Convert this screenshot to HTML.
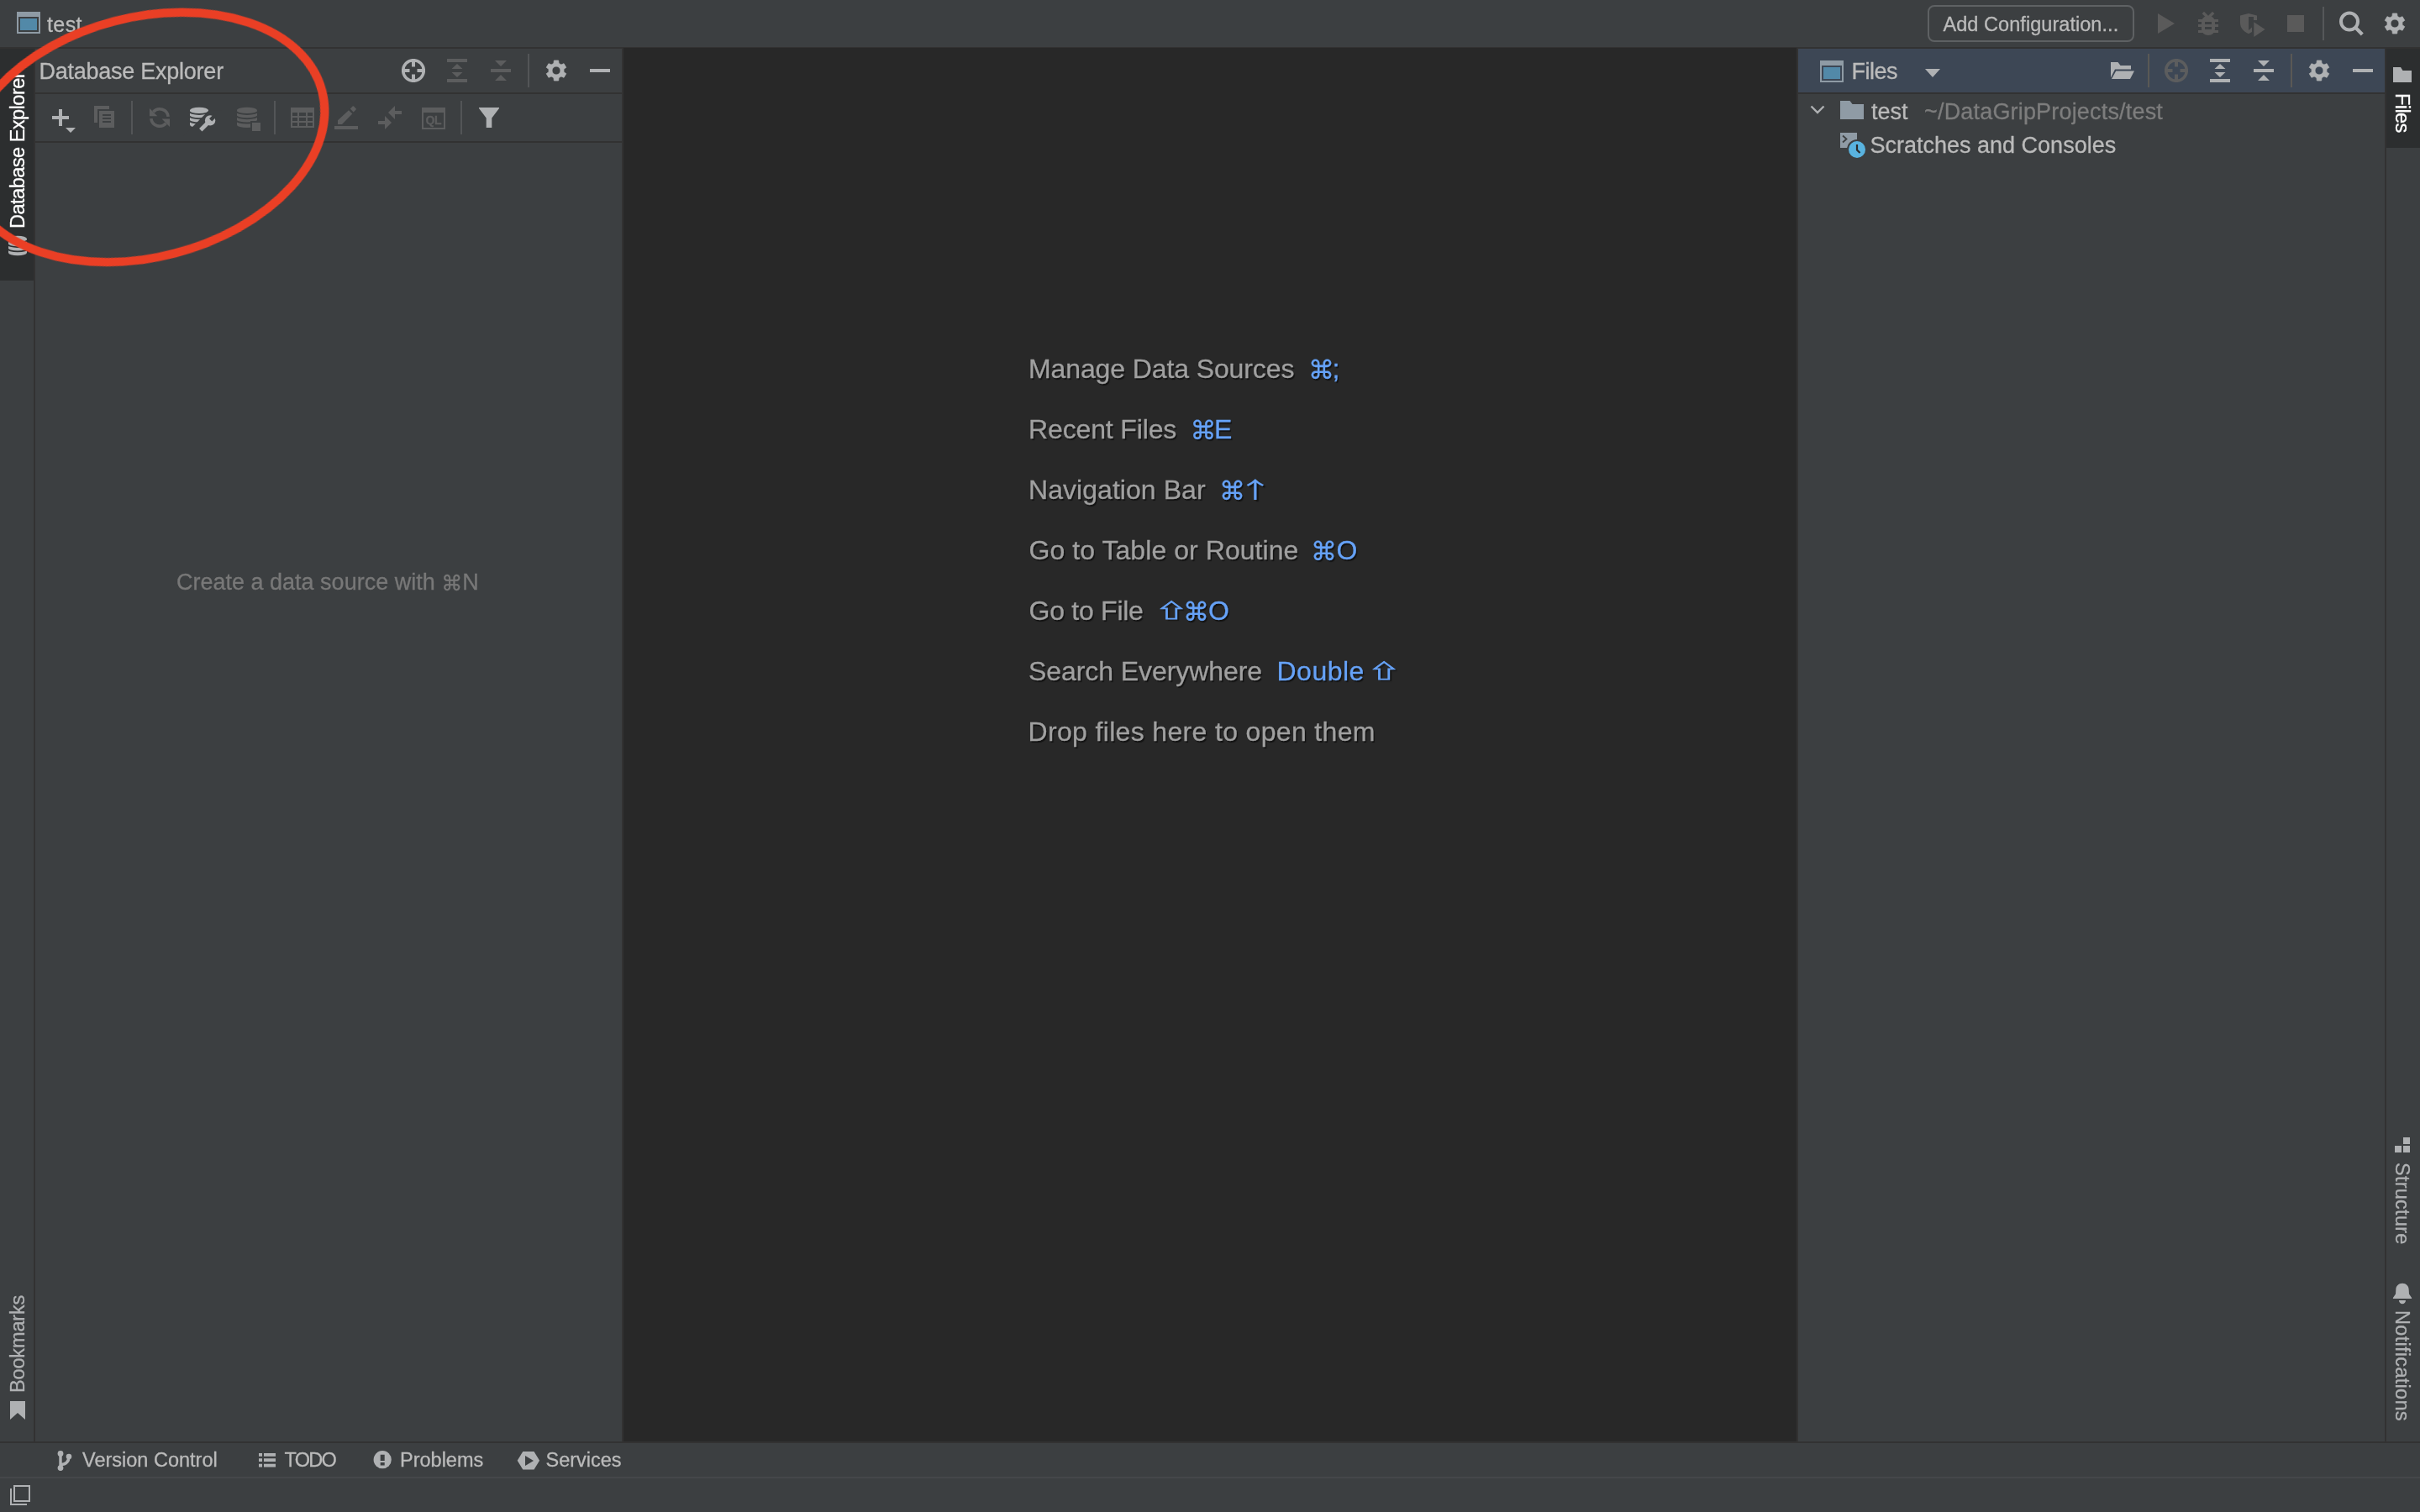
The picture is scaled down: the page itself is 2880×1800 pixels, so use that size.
<!DOCTYPE html>
<html lang="en">
<head>
<meta charset="utf-8">
<title>test - DataGrip</title>
<style>
html,body{margin:0;padding:0;}
body{width:2880px;height:1800px;overflow:hidden;position:relative;background:#3c3f41;
  font-family:"Liberation Sans","DejaVu Sans",sans-serif;color:#bbbbbb;}
.abs{position:absolute;}
.bar{position:absolute;background:#3c3f41;}
.line{position:absolute;background:#323232;}
.t{position:absolute;white-space:nowrap;line-height:1;margin:0;padding:0;-webkit-text-stroke-width:.3px;}
.sym{font-family:"DejaVu Sans",sans-serif;}
svg{position:absolute;overflow:visible;}
.vt{position:absolute;white-space:nowrap;line-height:1;transform-origin:0 0;-webkit-text-stroke-width:.3px;}
/* editor hints */
.hint{position:absolute;white-space:nowrap;line-height:1;font-size:32px;color:#a0a0a0;-webkit-text-stroke-width:.3px;text-shadow:1.5px 1.5px 1px rgba(0,0,0,.55);}
.hint.sc{color:#66a2f7;}
.hint .sym{font-size:31px;position:relative;top:1px;margin-right:-2.5px;letter-spacing:0;}
.hint .arr{font-family:"Noto Sans CJK SC","DejaVu Sans",sans-serif;font-size:26.7px;display:inline-block;width:20px;text-align:center;margin-left:4px;top:-1px;transform:scaleX(1.6);transform-origin:50% 50%;-webkit-text-stroke-width:.15px;text-indent:-3.4px;}
.hint .shf{font-family:"Noto Sans CJK SC","DejaVu Sans",sans-serif;font-size:23.2px;display:inline-block;width:26px;text-align:center;top:-2.7px;transform:scaleX(1.65);transform-origin:50% 50%;-webkit-text-stroke-width:.8px;text-indent:1.4px;}
</style>
</head>
<body>
<div id="root" style="position:absolute;left:0;top:0;width:2880px;height:1800px;will-change:transform;">

<!-- ===== base regions ===== -->
<div class="bar" id="topbar" style="left:0;top:0;width:2880px;height:56px;"></div>
<div class="line" style="left:0;top:56px;width:2880px;height:2px;"></div>

<div class="bar" id="lstripe" style="left:0;top:58px;width:40px;height:1658px;"></div>
<div class="abs" id="lsel" style="left:0;top:58px;width:40px;height:276px;background:#2c2e2f;"></div>
<div class="line" style="left:40px;top:58px;width:2px;height:1658px;"></div>

<div class="bar" id="lpanel" style="left:42px;top:58px;width:698px;height:1658px;"></div>
<div class="line" style="left:42px;top:110px;width:698px;height:2px;"></div>
<div class="line" style="left:42px;top:168px;width:698px;height:2px;"></div>
<div class="line" style="left:740px;top:58px;width:2px;height:1658px;"></div>

<div class="abs" id="editor" style="left:742px;top:57px;width:1396px;height:1659px;background:#282828;"></div>

<div class="line" style="left:2138px;top:58px;width:2px;height:1658px;"></div>
<div class="bar" id="rpanel" style="left:2140px;top:58px;width:698px;height:1658px;"></div>
<div class="abs" id="rhead" style="left:2140px;top:58px;width:698px;height:52px;background:#3d4755;"></div>
<div class="line" style="left:2140px;top:110px;width:698px;height:2px;"></div>
<div class="line" style="left:2838px;top:58px;width:2px;height:1658px;"></div>
<div class="bar" id="rstripe" style="left:2840px;top:58px;width:40px;height:1658px;"></div>
<div class="abs" id="rsel" style="left:2840px;top:58px;width:40px;height:118px;background:#2c2e2f;"></div>

<div class="line" style="left:0;top:1716px;width:2880px;height:2px;"></div>
<div class="bar" id="bbar" style="left:0;top:1718px;width:2880px;height:40px;"></div>
<div class="abs" style="left:0;top:1758px;width:2880px;height:2px;background:#45474a;"></div>
<div class="bar" id="status" style="left:0;top:1760px;width:2880px;height:40px;"></div>

<!-- SECTION:TOPBAR -->
<svg width="2880" height="56" style="left:0;top:0;" viewBox="0 0 2880 56">
  <!-- project icon -->
  <rect x="20" y="14" width="28" height="26" fill="#8f9ba5"/>
  <rect x="22" y="20" width="24" height="18" fill="#3c3f41"/>
  <rect x="24" y="22" width="20" height="14" fill="#5289a8"/>
  <!-- add configuration button -->
  <rect x="2295" y="7" width="244" height="42" rx="7" ry="7" fill="none" stroke="#5e6163" stroke-width="2"/>
  <!-- run -->
  <path d="M2568 16 L2588 28 L2568 40Z" fill="#5a5a5a"/>
  <!-- debug -->
  <g fill="#5a5a5a" stroke="none">
    <path d="M2620 27 C2620 21.5 2623.5 19 2628 19 C2632.500 19 2636 21.5 2636 27 L2636 34 C2636 39 2632.500 42 2628 42 C2623.500 42 2620 39 2620 34Z"/>
    <rect x="2616" y="23" width="24" height="3"/>
    <rect x="2616" y="29" width="24" height="3"/>
    <rect x="2616" y="36" width="24" height="3"/>
    <path d="M2620.600 16.200 L2623 13.800 L2628 18.800 L2633 13.800 L2635.400 16.200 L2629.500 22 L2626.500 22Z"/>
  </g>
  <rect x="2624" y="26" width="8" height="3" fill="#3c3f41"/>
  <rect x="2624" y="32" width="8" height="3" fill="#3c3f41"/>
  <!-- coverage -->
  <path d="M2666 18.500 L2676 16 L2686 18.500 L2686 24 L2682 24 L2682 20 L2676 20 L2676 36 L2680 32.500 L2680 38 L2676 40.200 C2669.500 37 2666 33 2666 27Z" fill="#5a5a5a"/>
  <path d="M2682.300 26.300 L2695.600 35 L2682.300 44Z" fill="#5a5a5a"/>
  <!-- stop -->
  <rect x="2722" y="18" width="20" height="20" fill="#5a5a5a"/>
  <!-- separator -->
  <rect x="2764" y="8" width="2" height="40" fill="#555759"/>
  <!-- search -->
  <circle cx="2796" cy="25.600" r="10" fill="none" stroke="#afb1b3" stroke-width="4"/>
  <path d="M2803.200 32.800 L2811.300 40.900" stroke="#afb1b3" stroke-width="4.200" fill="none"/>
  <!-- settings gear -->
  <path fill-rule="evenodd" fill="#afb1b3" stroke="#afb1b3" stroke-width=".8" stroke-linejoin="round" d="M2853.04 19.42 L2852.66 15.99 L2847.34 15.99 L2846.96 19.42 L2844.09 21.08 L2840.93 19.69 L2838.27 24.30 L2841.05 26.34 L2841.05 29.66 L2838.27 31.70 L2840.93 36.31 L2844.09 34.92 L2846.96 36.58 L2847.34 40.01 L2852.66 40.01 L2853.04 36.58 L2855.91 34.92 L2859.07 36.31 L2861.73 31.70 L2858.95 29.66 L2858.95 26.34 L2861.73 24.30 L2859.07 19.69 L2855.91 21.08Z M2845.00 28.00 a5.00 5.00 0 1 0 10.00 0 a5.00 5.00 0 1 0 -10.00 0Z"/>
</svg>
<div class="t" id="t_test" style="left:56px;top:17px;font-size:25px;letter-spacing:.4px;color:#bbbbbb;">test</div>
<div class="t" id="t_addcfg" style="left:2312.5px;top:18px;font-size:23.5px;letter-spacing:.05px;color:#bbbbbb;">Add Configuration...</div>

<!-- SECTION:LEFT -->
<svg width="742" height="1660" style="left:0;top:58px;" viewBox="0 58 742 1660">
  <!-- header: locate -->
  <circle cx="492" cy="84" r="12.300" fill="none" stroke="#afb1b3" stroke-width="3.500"/>
  <path d="M490 70 h4 v9.500 h-4z M490 98 h4 v-9.500 h-4z M478 82 v4 h9.500 v-4z M506 82 v4 h-9.500 v-4z" fill="#afb1b3"/>
  <!-- expand all (dim) -->
  <path d="M532 70 h24 v4 h-24z M532 94 h24 v4 h-24z M537.500 82 L544 76 L550.500 82z M537.500 86 L544 92 L550.500 86z" fill="#5c5d5e"/>
  <!-- collapse all (dim) -->
  <path d="M584 82 h24 v4 h-24z M589 72 h14 L596 79z M589 96 h14 L596 89z" fill="#5c5d5e"/>
  <rect x="628" y="64" width="2" height="40" fill="#535557"/>
  <path fill-rule="evenodd" fill="#afb1b3" stroke="#afb1b3" stroke-width=".8" stroke-linejoin="round" d="M665.04 75.42 L664.66 71.99 L659.34 71.99 L658.96 75.42 L656.09 77.08 L652.93 75.69 L650.27 80.30 L653.05 82.34 L653.05 85.66 L650.27 87.70 L652.93 92.31 L656.09 90.92 L658.96 92.58 L659.34 96.01 L664.66 96.01 L665.04 92.58 L667.91 90.92 L671.07 92.31 L673.73 87.70 L670.95 85.66 L670.95 82.34 L673.73 80.30 L671.07 75.69 L667.91 77.08Z M657.00 84.00 a5.00 5.00 0 1 0 10.00 0 a5.00 5.00 0 1 0 -10.00 0Z"/>
  <rect x="702" y="82" width="24" height="4" fill="#afb1b3"/>

  <!-- toolbar: add -->
  <path d="M70 130 h4 v8 h8 v4 h-8 v8 h-4 v-8 h-8 v-4 h8z M78 152 h12 l-6 6z" fill="#afb1b3"/>
  <!-- copy (dim) -->
  <path d="M112 126 h18 v4 h-14 v16 h-4z M118 132 h18 v20 h-18z" fill="#5c5d5e"/>
  <path d="M122 136 h10 v2 h-10z M122 140 h10 v2 h-10z M122 144 h10 v2 h-10z" fill="#3c3f41"/>
  <rect x="156" y="120" width="2" height="40" fill="#535557"/>
  <!-- refresh (dim) -->
  <path d="M182.42 133.17 A10.2 10.2 0 0 1 200.14 138.93" fill="none" stroke="#5c5d5e" stroke-width="3.6"/>
  <path d="M178 129 V138.300 H187.300Z" fill="#5c5d5e"/>
  <path d="M179.86 141.07 A10.2 10.2 0 0 0 197.58 146.83" fill="none" stroke="#5c5d5e" stroke-width="3.6"/>
  <path d="M202 151 V141.500 H192.600Z" fill="#5c5d5e"/>
  <!-- db properties (light) -->
  <path d="M226 131.3 A11 3.6 0 0 1 248 131.3 V148.4 A11 3.6 0 0 1 226 148.4Z" fill="#afb1b3"/><path d="M225 132.3 A12 3.6 0 0 0 249 132.3" fill="none" stroke="#3c3f41" stroke-width="2.0"/><path d="M225 137.6 A12 3.6 0 0 0 249 137.6" fill="none" stroke="#3c3f41" stroke-width="2.0"/><path d="M225 142.9 A12 3.6 0 0 0 249 142.9" fill="none" stroke="#3c3f41" stroke-width="2.0"/>
  <path d="M248.600 131.400 L264 131.400 L264 162 L218 162z" fill="#3c3f41"/>
  <g transform="translate(250.100,143.400) rotate(-45)">
    <circle r="6.200" fill="#afb1b3"/><rect x="0.800" y="-2.300" width="8" height="4.600" fill="#3c3f41"/>
    <rect x="-16" y="-2.450" width="12" height="4.900" fill="#afb1b3"/>
  </g>
  <!-- db stop (dim) -->
  <path d="M282 131.3 A12 3.6 0 0 1 306 131.3 V148.4 A12 3.6 0 0 1 282 148.4Z" fill="#5c5d5e"/><path d="M281 132.3 A13 3.6 0 0 0 307 132.3" fill="none" stroke="#3c3f41" stroke-width="2.0"/><path d="M281 137.6 A13 3.6 0 0 0 307 137.6" fill="none" stroke="#3c3f41" stroke-width="2.0"/><path d="M281 142.9 A13 3.6 0 0 0 307 142.9" fill="none" stroke="#3c3f41" stroke-width="2.0"/>
  <rect x="298" y="144" width="14" height="14" fill="#3c3f41"/>
  <rect x="300" y="146" width="10" height="10" fill="#5c5d5e"/>
  <rect x="326" y="120" width="2" height="40" fill="#535557"/>
  <!-- table (dim) -->
  <rect x="346" y="128" width="28" height="24" fill="#5c5d5e"/>
  <path d="M348 134 h6 v4 h-6z M356 134 h8 v4 h-8z M366 134 h6 v4 h-6z M348 140 h6 v4 h-6z M356 140 h8 v4 h-8z M366 140 h6 v4 h-6z M348 146 h6 v4 h-6z M356 146 h8 v4 h-8z M366 146 h6 v4 h-6z" fill="#3c3f41"/>
  <!-- edit (dim) -->
  <path d="M398 150 h28 v4 h-28z M402 143.300 L415 131.300 L419.300 135.600 L407 148 L402 148z" fill="#5c5d5e"/>
  <path d="M416.800 129.400 L419.600 126.600 Q420.300 125.900 421 126.600 L423.600 129.200 Q424.300 129.900 423.600 130.600 L420.600 133.600z" fill="#5c5d5e"/>
  <!-- jump to (dim) -->
  <path d="M462 134 L470 126 V132 H478 V136 H470 V142z M466 146 L458 138 V144 H450 V148 H458 V154z" fill="#5c5d5e"/>
  <!-- QL console (dim) -->
  <path fill-rule="evenodd" d="M502 128 h28 v26 h-28z M504 134 v18 h24 v-18z" fill="#5c5d5e"/>
  <rect x="548" y="120" width="2" height="40" fill="#535557"/>
  <!-- filter (light) -->
  <path d="M570 128 H594 V129 L585.300 140.500 V152 H578.700 V140.500 L570 129z" fill="#afb1b3"/>

  <!-- stripe icons -->
  <path d="M10 284.3 A11 3.6 0 0 1 32 284.3 V300.7 A11 3.6 0 0 1 10 300.7Z" fill="#afb1b3"/><path d="M9 285.2 A12 3.6 0 0 0 33 285.2" fill="none" stroke="#2c2e2f" stroke-width="1.7"/><path d="M9 290.5 A12 3.6 0 0 0 33 290.5" fill="none" stroke="#2c2e2f" stroke-width="1.7"/><path d="M9 295.8 A12 3.6 0 0 0 33 295.8" fill="none" stroke="#2c2e2f" stroke-width="1.7"/>
  <path d="M12 1668 h18 v22 l-9 -8 l-9 8z" fill="#afb1b3"/>
</svg>
<div class="t" id="t_dbe" style="left:46.5px;top:72px;font-size:27px;color:#bbbbbb;letter-spacing:-.25px;">Database Explorer</div>
<div class="t" id="t_ql" style="left:506.5px;top:136px;font-size:14px;font-weight:bold;color:#5c5d5e;letter-spacing:-.3px;">QL</div>
<div class="t" id="t_create" style="left:210px;top:679.5px;font-size:27px;color:#787878;">Create a data source with <span class="sym" style="font-size:25px;position:relative;top:1.5px;">⌘</span>N</div>
<div class="vt" id="v_dbe" style="left:9.5px;top:272px;font-size:23.5px;color:#ffffff;transform:rotate(-90deg);letter-spacing:-.5px;">Database Explorer</div>
<div class="vt" id="v_bm" style="left:9.5px;top:1658px;letter-spacing:-.15px;font-size:23.5px;color:#afb1b3;transform:rotate(-90deg);">Bookmarks</div>

<!-- SECTION:EDITOR -->
<div class="hint" style="left:1224px;top:422.5px;letter-spacing:-.11px;">Manage Data Sources</div>
<div class="hint sc" style="left:1557px;top:422.5px;"><span class="sym">⌘</span>;</div>
<div class="hint" style="left:1224px;top:494.5px;letter-spacing:-.14px;">Recent Files</div>
<div class="hint sc" style="left:1416.5px;top:494.5px;"><span class="sym">⌘</span>E</div>
<div class="hint" style="left:1224px;top:566.5px;letter-spacing:.05px;">Navigation Bar</div>
<div class="hint sc" style="left:1451px;top:566.5px;"><span class="sym">⌘</span><span class="sym arr">↑</span></div>
<div class="hint" style="left:1224.5px;top:638.5px;letter-spacing:.06px;">Go to Table or Routine</div>
<div class="hint sc" style="left:1560px;top:638.5px;"><span class="sym" style="margin-right:-.5px">⌘</span>O</div>
<div class="hint" style="left:1224.5px;top:710.5px;letter-spacing:-.26px;">Go to File</div>
<div class="hint sc" style="left:1379.5px;top:710.5px;"><span class="sym shf">⇧</span><span class="sym" style="margin-left:5px;margin-right:-1px">⌘</span>O</div>
<div class="hint" style="left:1224px;top:782.5px;letter-spacing:-.07px;">Search Everywhere</div>
<div class="hint sc" style="left:1519.5px;top:782.5px;letter-spacing:.5px;">Double<span class="sym shf" style="margin-left:8.6px">⇧</span></div>
<div class="hint" style="left:1223.5px;top:854.5px;letter-spacing:.34px;">Drop files here to open them</div>
<!-- SECTION:RIGHT -->
<svg width="742" height="1660" style="left:2138px;top:58px;" viewBox="2138 58 742 1660">
  <!-- files view icon -->
  <rect x="2166" y="72" width="28" height="26" fill="#8f9ba5"/>
  <rect x="2168" y="78" width="24" height="18" fill="#3d4755"/>
  <rect x="2170" y="80" width="20" height="14" fill="#5289a8"/>
  <path d="M2291 82 h18 l-9 10z" fill="#afb1b3"/>
  <!-- open folder -->
  <path d="M2512 74 H2520.500 L2523.500 78 H2536 V82.500 H2517 L2512 92.500z M2518.200 84.500 H2540 L2535 94 H2513z" fill="#afb1b3"/>
  <rect x="2556" y="64" width="2" height="40" fill="#5a5955"/>
  <!-- locate (dim) -->
  <circle cx="2590" cy="84" r="12.300" fill="none" stroke="#5c5d5e" stroke-width="3.500"/>
  <path d="M2588 70 h4 v9.500 h-4z M2588 98 h4 v-9.500 h-4z M2576 82 v4 h9.500 v-4z M2604 82 v4 h-9.500 v-4z" fill="#5c5d5e"/>
  <!-- expand all -->
  <path d="M2630 70 h24 v4 h-24z M2630 94 h24 v4 h-24z M2635.500 82 L2642 76 L2648.500 82z M2635.500 86 L2642 92 L2648.500 86z" fill="#afb1b3"/>
  <!-- collapse all -->
  <path d="M2682 82 h24 v4 h-24z M2687 72 h14 L2694 79z M2687 96 h14 L2694 89z" fill="#afb1b3"/>
  <rect x="2726" y="64" width="2" height="40" fill="#5a5955"/>
  <path fill-rule="evenodd" fill="#afb1b3" stroke="#afb1b3" stroke-width=".8" stroke-linejoin="round" d="M2763.04 75.42 L2762.66 71.99 L2757.34 71.99 L2756.96 75.42 L2754.09 77.08 L2750.93 75.69 L2748.27 80.30 L2751.05 82.34 L2751.05 85.66 L2748.27 87.70 L2750.93 92.31 L2754.09 90.92 L2756.96 92.58 L2757.34 96.01 L2762.66 96.01 L2763.04 92.58 L2765.91 90.92 L2769.07 92.31 L2771.73 87.70 L2768.95 85.66 L2768.95 82.34 L2771.73 80.30 L2769.07 75.69 L2765.91 77.08Z M2755.00 84.00 a5.00 5.00 0 1 0 10.00 0 a5.00 5.00 0 1 0 -10.00 0Z"/>
  <rect x="2800" y="82" width="24" height="4" fill="#afb1b3"/>

  <!-- tree -->
  <path d="M2155.500 126.500 L2163 134 L2170.500 126.500" fill="none" stroke="#afb1b3" stroke-width="2.400"/>
  <path d="M2190 120 H2201.500 L2204.500 124 H2218 V142 H2190z" fill="#8f9ba5"/>
  <rect x="2190" y="158" width="20" height="18" fill="#8f9ba5"/>
  <path d="M2193 161.500 L2197.500 165.500 L2193 169.500" fill="none" stroke="#3c3f41" stroke-width="1.800"/>
  <circle cx="2210" cy="178" r="12" fill="#3c3f41"/>
  <circle cx="2210" cy="178" r="10" fill="#59b3df"/>
  <path d="M2210 172 V178.500 L2213.500 182" fill="none" stroke="#2b2b2b" stroke-width="2.200"/>

  <!-- right stripe icons -->
  <path d="M2848 80 H2857 L2859.500 84 H2870 V98 H2848z" fill="#afb1b3"/>
  <path d="M2860 1354 h8 v8 h-8z M2850 1364 h8 v8 h-8z M2860 1364 h8 v8 h-8z" fill="#afb1b3"/>
  <path d="M2859 1527.800 C2854.500 1527.800 2851.300 1531 2851.300 1535.500 L2851 1540.500 L2847.900 1545 V1546 H2870.100 V1545 L2867 1540.500 L2866.700 1535.500 C2866.700 1531 2863.500 1527.800 2859 1527.800z M2855 1548 H2863 A4 4.300 0 0 1 2855 1548z" fill="#afb1b3"/>
</svg>
<div class="t" id="t_files" style="left:2203.500px;top:72px;font-size:27px;color:#bbbbbb;letter-spacing:-.5px;">Files</div>
<div class="t" id="t_rtest" style="left:2227px;top:119.500px;font-size:27px;color:#bbbbbb;">test</div>
<div class="t" id="t_path" style="left:2290px;top:119.500px;font-size:27px;color:#7d7d7d;letter-spacing:.18px;">~/DataGripProjects/test</div>
<div class="t" id="t_scr" style="left:2225.500px;top:159.500px;font-size:27px;color:#bbbbbb;">Scratches and Consoles</div>
<div class="vt" id="v_files" style="left:2870px;top:110.5px;font-size:23.5px;color:#ffffff;transform:rotate(90deg);letter-spacing:-.6px;">Files</div>
<div class="vt" id="v_struct" style="left:2870px;top:1384px;font-size:23.5px;color:#afb1b3;transform:rotate(90deg);letter-spacing:.25px;">Structure</div>
<div class="vt" id="v_notif" style="left:2870px;top:1559.5px;font-size:23.5px;color:#afb1b3;transform:rotate(90deg);letter-spacing:.3px;">Notifications</div>

<!-- SECTION:BOTTOM -->
<svg width="2880" height="84" style="left:0;top:1716px;" viewBox="0 1716 2880 84">
  <!-- version control -->
  <circle cx="72" cy="1730.400" r="3.400" fill="#afb1b3"/><circle cx="82" cy="1734" r="3.300" fill="#afb1b3"/><circle cx="72" cy="1747.600" r="3.400" fill="#afb1b3"/>
  <path d="M72 1730.400 V1747.600 M82 1734 C82 1740 79 1743.200 72 1743.800" fill="none" stroke="#afb1b3" stroke-width="3.400"/>
  <!-- todo -->
  <path d="M308 1730 h4 v3.800 h-4z M314 1730 h14 v3.800 h-14z M308 1736.300 h4 v3.800 h-4z M314 1736.300 h14 v3.800 h-14z M308 1742.700 h4 v3.800 h-4z M314 1742.700 h14 v3.800 h-14z" fill="#afb1b3"/>
  <!-- problems -->
  <circle cx="455.200" cy="1737.700" r="10.600" fill="#afb1b3"/>
  <path d="M452.700 1731.700 h5 v7.200 h-5z M452.700 1741 h5 v3.400 h-5z" fill="#3c3f41"/>
  <!-- services -->
  <path d="M615.700 1738.800 L622.300 1728 H635.500 L642.100 1738.800 L635.500 1749.600 H622.300z" fill="#afb1b3"/>
  <path d="M625 1733 L635 1739 L625 1745z" fill="#3c3f41"/>
  <!-- status icon -->
  <path d="M17 1769 h18 v18 h-18z" fill="none" stroke="#afb1b3" stroke-width="2"/>
  <path d="M13 1772 V1791 H32" fill="none" stroke="#afb1b3" stroke-width="2"/>
</svg>
<div class="t" id="b_vc" style="left:98px;top:1727px;font-size:23.5px;color:#bbbbbb;">Version Control</div>
<div class="t" id="b_todo" style="left:338.5px;top:1727px;font-size:23.5px;color:#bbbbbb;letter-spacing:-1.7px;">TODO</div>
<div class="t" id="b_prob" style="left:476px;top:1727px;font-size:23.5px;color:#bbbbbb;">Problems</div>
<div class="t" id="b_svc" style="left:649.5px;top:1727px;font-size:23.5px;color:#bbbbbb;">Services</div>

<!-- SECTION:ELLIPSE -->
<svg width="420" height="340" style="left:0;top:0;" viewBox="0 0 420 340">
  <ellipse cx="172.12" cy="163.41" rx="218.24" ry="142.69" transform="rotate(-14.65 172.12 163.41)" fill="none" stroke="#ea3f25" stroke-width="10.2"/>
</svg>


</div>
</body>
</html>
